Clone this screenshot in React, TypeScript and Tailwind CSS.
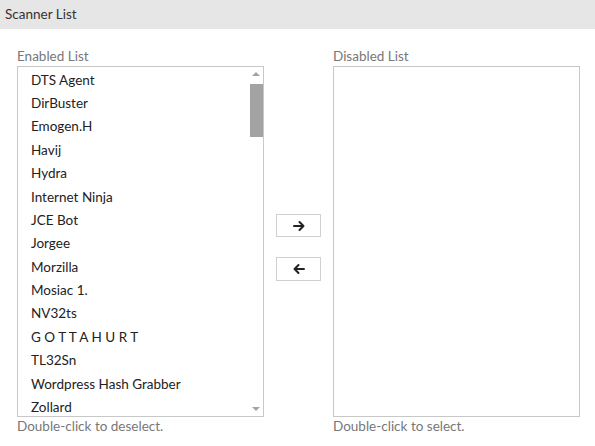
import React from "react";

const items = [
  "DTS Agent",
  "DirBuster",
  "Emogen.H",
  "Havij",
  "Hydra",
  "Internet Ninja",
  "JCE Bot",
  "Jorgee",
  "Morzilla",
  "Mosiac 1.",
  "NV32ts",
  "G O T T A H U R T",
  "TL32Sn",
  "Wordpress Hash Grabber",
  "Zollard",
];

function Arrow({ dir }: { dir: "left" | "right" }) {
  return (
    <svg width="12" height="12" viewBox="0 0 12 12" className={dir === "left" ? "rotate-180" : ""}>
      <path d="M1 6 H10.5 M6.5 2 L10.5 6 L6.5 10" fill="none" stroke="#222" strokeWidth="2" strokeLinecap="round" strokeLinejoin="round" />
    </svg>
  );
}

export default function App() {
  return (
    <div className="w-[595px] h-[446px] bg-white overflow-hidden" style={{ fontFamily: "Lato, 'Liberation Sans', sans-serif" }}>
      <div className="h-[29px] bg-[#e6e6e6] flex items-center px-[5px] text-[13.5px] text-[#333]">Scanner List</div>
      <div className="flex pl-[17px] pt-[18px]">
        <div className="flex flex-col w-[247px]">
          <div className="text-[13.5px] leading-[19px] text-[#777]">Enabled List</div>
          <div className="h-[351px] border border-[#c8c8c8] flex">
            <div className="flex-1 pt-[1px] pl-[13px] overflow-hidden">
              {items.map((it) => (
                <div key={it} className="h-[23.4px] flex items-center text-[13.5px] text-[#222] whitespace-nowrap">
                  {it}
                </div>
              ))}
            </div>
            <div className="w-[14px] flex flex-col items-center pt-[5px] pb-[5px]">
              <div className="w-0 h-0 border-l-[4px] border-r-[4px] border-b-[4px] border-l-transparent border-r-transparent border-b-[#a3a3a3]" />
              <div className="w-[13px] h-[53px] bg-[#a3a3a3] mt-[8px]" />
              <div className="flex-1" />
              <div className="w-0 h-0 border-l-[4px] border-r-[4px] border-t-[4px] border-l-transparent border-r-transparent border-t-[#a3a3a3]" />
            </div>
          </div>
          <div className="text-[13.5px] leading-[19px] text-[#777]">Double-click to deselect.</div>
        </div>
        <div className="w-[69px] flex flex-col items-center gap-[20px] pt-[167px]">
          <button className="w-[45px] h-[23px] border border-[#d0d0d0] bg-white flex items-center justify-center">
            <Arrow dir="right" />
          </button>
          <button className="w-[45px] h-[24px] border border-[#d0d0d0] bg-white flex items-center justify-center">
            <Arrow dir="left" />
          </button>
        </div>
        <div className="flex flex-col w-[247px]">
          <div className="text-[13.5px] leading-[19px] text-[#777]">Disabled List</div>
          <div className="h-[351px] border border-[#c8c8c8]" />
          <div className="text-[13.5px] leading-[19px] text-[#777]">Double-click to select.</div>
        </div>
      </div>
    </div>
  );
}
